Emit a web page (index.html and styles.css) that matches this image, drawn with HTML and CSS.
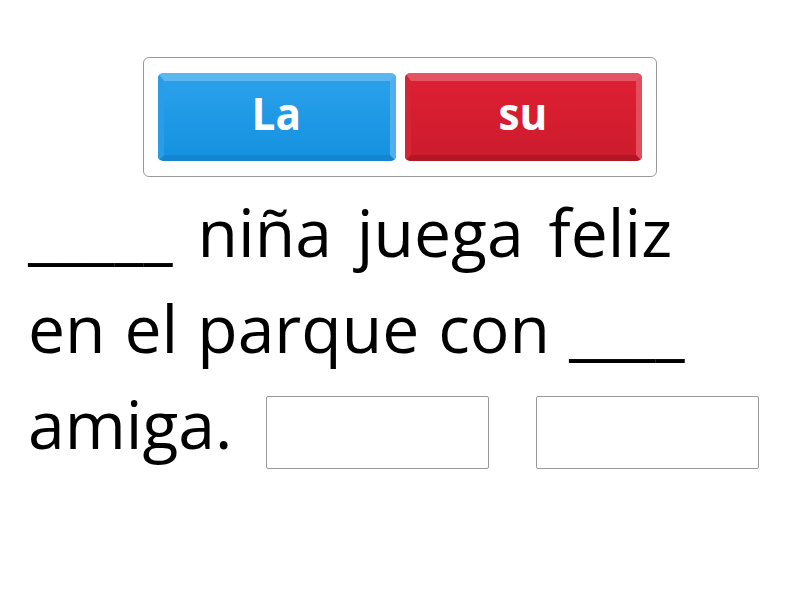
FILE: index.html
```html
<!DOCTYPE html>
<html lang="es">
<head>
  <meta charset="UTF-8" />
  <title>Completa la frase</title>
  <link rel="stylesheet" href="styles.css">
</head>
<body>
  <div class="bank">
    <div class="tile tile-blue"><span class="label">La</span></div>
    <div class="tile tile-red"><span class="label">su</span></div>
  </div>

  <div class="sentence">
    <span class="word">_____</span>
    <span class="word spaced">niña</span>
    <span class="word spaced">juega</span>
    <span class="word spaced">feliz</span>
    <span class="break"></span>
    <span class="word">en</span>
    <span class="word">el</span>
    <span class="word">parque</span>
    <span class="word">con</span>
    <span class="word">____</span>
    <span class="break"></span>
    <span class="word">amiga.</span>
    <span class="slot"></span>
    <span class="slot"></span>
  </div>
</body>
</html>
```

FILE: styles.css
```css
body {
  margin: 0;
  font-family: "Open Sans", "DejaVu Sans", sans-serif;
  background: #fff;
  color: #000;
}
.bank {
  width: 484px;
  margin: 57px auto 0;
  padding: 15px 14px 15px;
  border: 1px solid #999;
  border-radius: 6px;
  display: flex;
  gap: 9px;
}
.tile {
  flex: 1;
  height: 88px;
  border-radius: 5px;
  color: #fff;
  display: flex;
  align-items: center;
  justify-content: center;
  box-sizing: border-box;
  border-style: solid;
  border-width: 8px 6px 6px 6px;
  padding-bottom: 11px;
}
.label {
  display: inline-block;
  font-weight: bold;
  font-size: 45px;
  line-height: 1;
  transform: scaleX(0.94);
}
.tile-blue {
  background: linear-gradient(#2aa0ea, #1592e0);
  border-color: #5ab7ef #4fb0ec #1486cf #2b9de6;
}
.tile-red {
  background: linear-gradient(#de1f33, #cc1c2d);
  border-color: #e45564 #e34d5c #b31726 #d52435;
}
.sentence {
  display: flex;
  flex-wrap: wrap;
  align-items: center;
  column-gap: 19px;
  padding: 0 0 0 28px;
  margin-top: 6px;
  font-size: 66px;
  line-height: 96px;
}
.spaced {
  margin-left: 6px;
}
.break {
  flex-basis: 100%;
  height: 0;
}
.slot {
  width: 221px;
  height: 71px;
  border: 1px solid #999;
  border-radius: 2px;
  margin-left: 15px;
  margin-top: 18px;
}
.slot + .slot {
  margin-left: 28px;
}
```
